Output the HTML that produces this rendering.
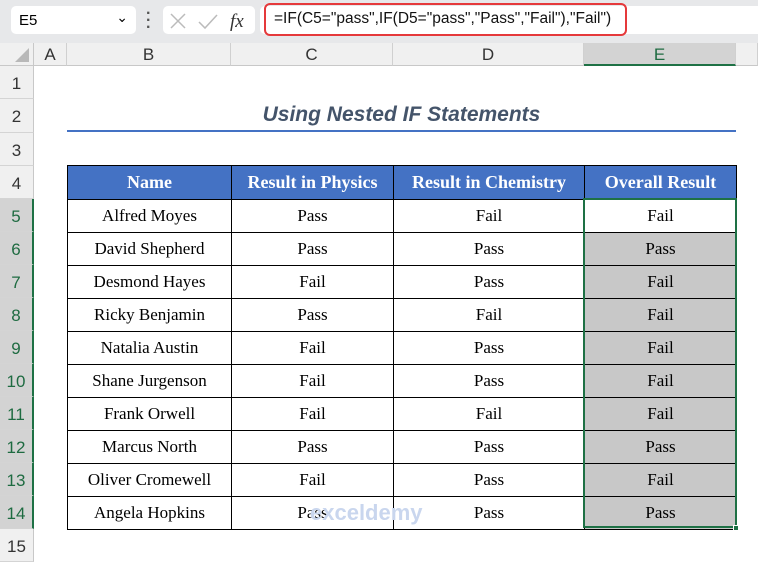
<!DOCTYPE html>
<html><head><style>
*{margin:0;padding:0;box-sizing:border-box}
body{width:758px;height:548px;overflow:hidden;background:#fff;font-family:"Liberation Sans",sans-serif;position:relative}
.a{position:absolute}
.tb{left:0;top:0;width:758px;height:43px;background:#e7e8ea}
.rh{left:0;width:34px;background:#f0f0f0;border-bottom:1px solid #d4d4d4;border-right:1px solid #c8c8c8;color:#333;font-size:17px;text-align:center;padding-top:8px}
.rh.s{background:#d3d3d3;color:#1e6b41;border-right:2px solid #1e7145}
.ch{top:43px;height:23px;background:#f0f0f0;border-right:1px solid #d0d0d0;border-bottom:1px solid #c8c8c8;text-align:center;font-size:17px;color:#333;line-height:23px}
table{position:absolute;left:67px;top:165px;border-collapse:collapse;font-family:"Liberation Serif",serif;font-size:17px}
td{border:1.5px solid #000;height:33px;text-align:center;padding:0}
th{border:1.5px solid #000;height:34px;background:#4472c4;color:#fff;font-weight:bold;font-size:18px}
td.g{background:#c8c8c8}
</style></head><body>
<div class="a tb"></div>
<div class="a" style="left:11px;top:6px;width:125px;height:28px;background:#fff;border-radius:5px;font-size:15px;padding:6px 8px">E5<span style="position:absolute;right:8px;top:3px;font-size:14px">&#8964;</span></div>
<div class="a" style="left:146px;top:10px;width:4px;height:20px;color:#555;font-size:16px;line-height:7px;font-weight:bold">·<br>·<br>·</div>
<div class="a" style="left:163px;top:6px;width:92px;height:28px;background:#fff;border-radius:5px"></div>
<svg class="a" style="left:168px;top:11px" width="90" height="20"><path d="M3 3L17 17M17 3L3 17" stroke="#bbb" stroke-width="1.5"/><path d="M31 11L37 17L49 4" stroke="#bbb" stroke-width="1.5" fill="none"/><text x="62" y="16" font-family="Liberation Serif" font-style="italic" font-size="19" fill="#333">fx</text></svg>
<div class="a" style="left:260px;top:6px;width:498px;height:28px;background:#fff;border-radius:5px 0 0 5px"></div>
<div class="a" style="left:264px;top:3px;width:363px;height:33px;border:2.5px solid #e5393b;border-radius:6px;font-size:15.5px;padding:5px 0 0 8px;color:#111;white-space:nowrap">=IF(C5="pass",IF(D5="pass","Pass","Fail"),"Fail")</div>
<div class="a" style="left:0;top:43px;width:34px;height:23px;background:#f0f0f0;border-right:1px solid #c8c8c8;border-bottom:1px solid #c8c8c8"><svg width="34" height="23"><path d="M29 5L29 19L15 19Z" fill="#b8b8b8"/></svg></div>
<div class="a ch" style="left:34px;width:33px">A</div>
<div class="a ch" style="left:67px;width:164px">B</div>
<div class="a ch" style="left:231px;width:162px">C</div>
<div class="a ch" style="left:393px;width:191px">D</div>
<div class="a ch" style="left:584px;width:152px;background:#d3d3d3;color:#1e6b41;border-bottom:2px solid #1e7145">E</div>
<div class="a ch" style="left:736px;width:22px"></div>
<div class="a rh" style="top:66px;height:33px">1</div>
<div class="a rh" style="top:99px;height:34px">2</div>
<div class="a rh" style="top:133px;height:33px">3</div>
<div class="a rh" style="top:166px;height:33px">4</div>
<div class="a rh s" style="top:199px;height:33px">5</div>
<div class="a rh s" style="top:232px;height:33px">6</div>
<div class="a rh s" style="top:265px;height:33px">7</div>
<div class="a rh s" style="top:298px;height:33px">8</div>
<div class="a rh s" style="top:331px;height:33px">9</div>
<div class="a rh s" style="top:364px;height:33px">10</div>
<div class="a rh s" style="top:397px;height:33px">11</div>
<div class="a rh s" style="top:430px;height:33px">12</div>
<div class="a rh s" style="top:463px;height:33px">13</div>
<div class="a rh s" style="top:496px;height:33px">14</div>
<div class="a rh" style="top:529px;height:33px">15</div>
<div class="a" style="left:67px;top:103px;width:669px;text-align:center;font-size:21px;font-weight:bold;font-style:italic;color:#44546a">Using Nested IF Statements</div>
<div class="a" style="left:67px;top:130px;width:669px;height:2px;background:#4472c4"></div>
<table>
<tr><th style="width:164px">Name</th><th style="width:162px">Result in Physics</th><th style="width:191px">Result in Chemistry</th><th style="width:152px">Overall Result</th></tr>
<tr><td>Alfred Moyes</td><td>Pass</td><td>Fail</td><td>Fail</td></tr>
<tr><td>David Shepherd</td><td>Pass</td><td>Pass</td><td class="g">Pass</td></tr>
<tr><td>Desmond Hayes</td><td>Fail</td><td>Pass</td><td class="g">Fail</td></tr>
<tr><td>Ricky Benjamin</td><td>Pass</td><td>Fail</td><td class="g">Fail</td></tr>
<tr><td>Natalia Austin</td><td>Fail</td><td>Pass</td><td class="g">Fail</td></tr>
<tr><td>Shane Jurgenson</td><td>Fail</td><td>Pass</td><td class="g">Fail</td></tr>
<tr><td>Frank Orwell</td><td>Fail</td><td>Fail</td><td class="g">Fail</td></tr>
<tr><td>Marcus North</td><td>Pass</td><td>Pass</td><td class="g">Pass</td></tr>
<tr><td>Oliver Cromewell</td><td>Fail</td><td>Pass</td><td class="g">Fail</td></tr>
<tr><td>Angela Hopkins</td><td>Pass</td><td>Pass</td><td class="g">Pass</td></tr>
</table>
<div class="a" style="left:583px;top:198px;width:154px;height:330px;border:2px solid #1e7145"></div>
<div class="a" style="left:733px;top:525px;width:6px;height:6px;background:#1e7145;border:1px solid #fff"></div>
<div class="a" style="left:310px;top:500px;font-size:22px;font-weight:bold;color:#c9d6ee">exceldemy</div>
</body></html>
